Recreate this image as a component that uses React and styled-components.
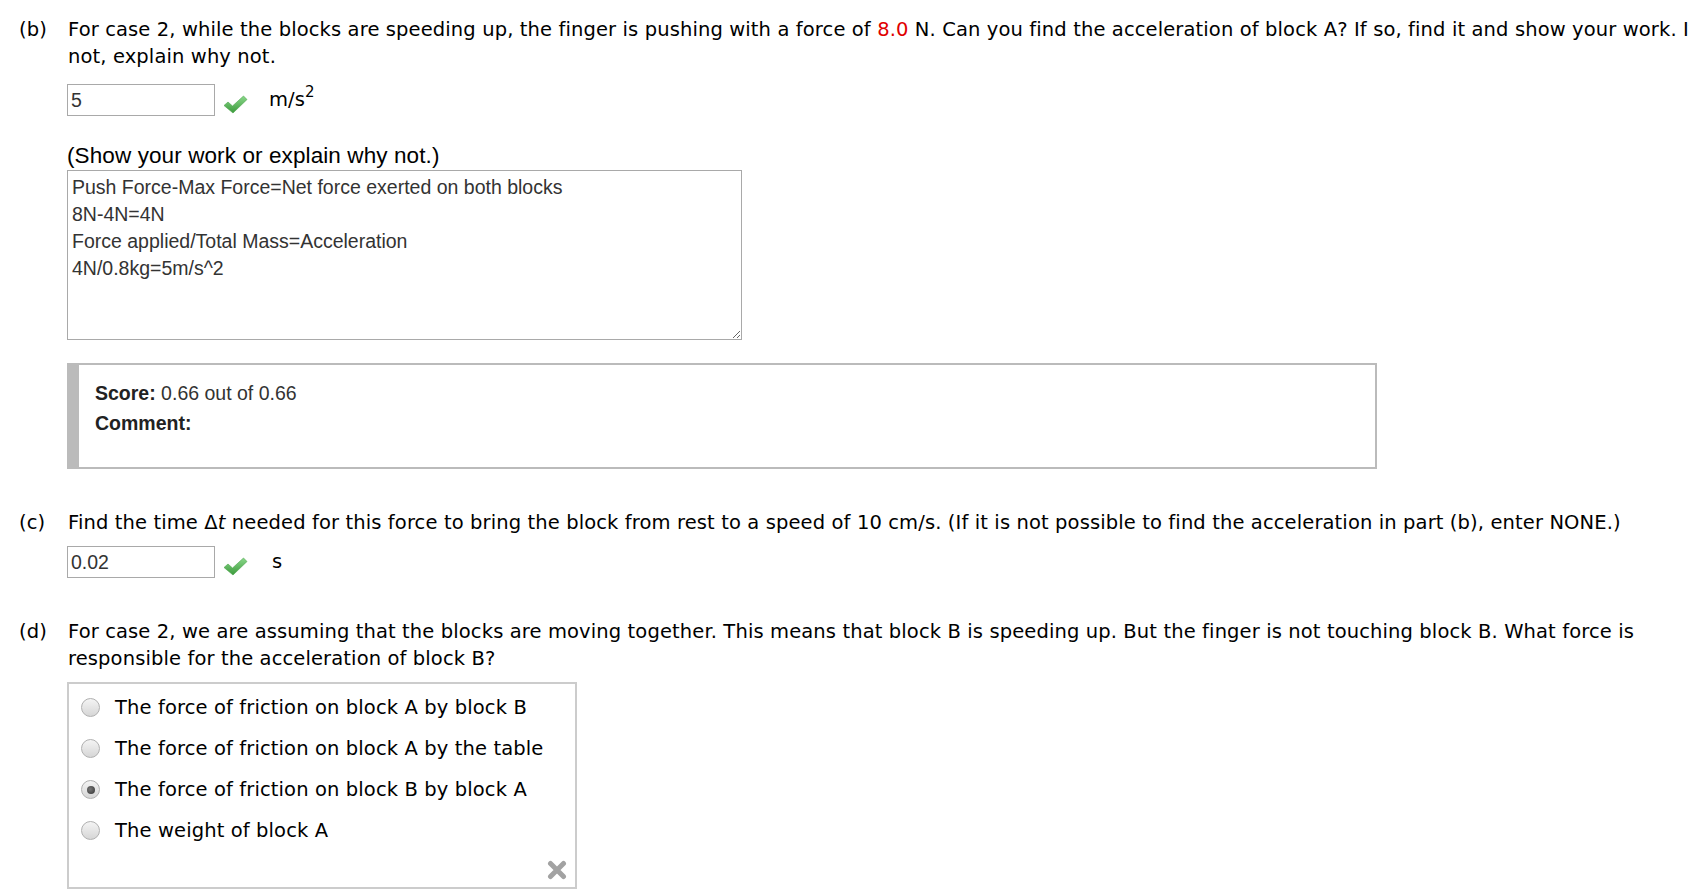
import React from "react";
import styled, { createGlobalStyle } from "styled-components";

const GlobalStyle = createGlobalStyle`
  html, body { margin: 0; padding: 0; background: #fff; overflow: hidden; }
  body { width: 1689px; height: 889px; }
  #root { width: 1689px; height: 889px; overflow: hidden; }
`;

const Page = styled.div`
  width: 1740px;
  padding: 15.5px 0 0 19px;
  box-sizing: border-box;
  font-family: "DejaVu Sans", Verdana, sans-serif;
  font-size: 19.5px;
  letter-spacing: 0.12px;
  line-height: 27px;
  color: #000;
`;

const Question = styled.section`
  display: grid;
  grid-template-columns: 48px 1650px;
  margin-bottom: 39.5px;
`;

const Label = styled.div`
  white-space: nowrap;
`;

const Body = styled.div`
  display: flex;
  flex-direction: column;
  align-items: flex-start;
`;

const Prompt = styled.p`
  margin: 0;
  padding-left: 1px;
`;

const Red = styled.span`
  color: #e00000;
`;

const AnswerRow = styled.div`
  display: flex;
  align-items: center;
  margin-top: ${(p) => p.$mt || 10.5}px;
`;

const TextInput = styled.input`
  box-sizing: border-box;
  width: 148px;
  height: 32px;
  border: 1px solid #a9a9a9;
  padding: 0 3px;
  margin: 0;
  font-family: "Liberation Sans", Arial, sans-serif;
  font-size: 19.5px;
  letter-spacing: 0;
  color: #333;
  background: #fff;
  outline: none;
`;

const CheckWrap = styled.span`
  display: inline-flex;
  margin-left: 8px;
  margin-top: 8px;
`;

const Unit = styled.span`
  margin-left: ${(p) => p.$ml || 21}px;
  margin-top: -2px;
  sup {
    font-size: 15px;
    vertical-align: 9px;
    line-height: 0;
  }
`;

const WorkLabel = styled.div`
  margin-top: 27px;
  font-family: "Liberation Sans", Arial, sans-serif;
  font-size: 22.5px;
  letter-spacing: 0.1px;
  line-height: 26px;
  color: #000;
`;

const WorkArea = styled.textarea`
  display: block;
  box-sizing: border-box;
  width: 675px;
  height: 170px;
  margin: 1px 0 0;
  padding: 2.5px 4px;
  border: 1px solid #a9a9a9;
  font-family: "Liberation Sans", Arial, sans-serif;
  font-size: 19.5px;
  letter-spacing: 0;
  line-height: 27px;
  color: #333;
  background: #fff;
  outline: none;
  resize: both;
`;

const ScoreBox = styled.div`
  box-sizing: border-box;
  width: 1310px;
  height: 106px;
  margin-top: 23px;
  border: 2px solid #bbbbbb;
  border-left-width: 12px;
  padding: 13px 16px;
  font-family: "Liberation Sans", Arial, sans-serif;
  font-size: 19.5px;
  letter-spacing: 0;
  line-height: 30px;
  color: #333;
`;

const ScoreLine = styled.div`
  b { color: #222; }
`;

const ChoiceBox = styled.div`
  position: relative;
  box-sizing: border-box;
  width: 510px;
  height: 207px;
  margin-top: 10.5px;
  border: 2px solid #cccccc;
  padding: 3px 0 0 12px;
`;

const Option = styled.label`
  display: flex;
  align-items: center;
  height: 41px;
  gap: 15px;
  cursor: pointer;
`;

const Radio = styled.span`
  box-sizing: border-box;
  width: 19px;
  height: 19px;
  border-radius: 50%;
  border: 1px solid #b0b0b0;
  background: linear-gradient(#f4f4f4, #d6d6d6);
  display: flex;
  align-items: center;
  justify-content: center;
  flex: none;
  &::after {
    content: "";
    display: ${(p) => (p.$checked ? "block" : "none")};
    width: 8px;
    height: 8px;
    border-radius: 50%;
    background: radial-gradient(circle at 40% 40%, #777, #333);
  }
`;

const Clear = styled.span`
  position: absolute;
  right: 8px;
  bottom: 7px;
  display: flex;
`;

const Check = () => (
  <svg width="25" height="19" viewBox="0 0 24 19">
    <defs>
      <linearGradient id="ck" x1="0" y1="0" x2="0" y2="1">
        <stop offset="0" stopColor="#8ad88a" />
        <stop offset="1" stopColor="#3c9a3c" />
      </linearGradient>
    </defs>
    <path d="M0.5 10.5 L4.5 7 L9 11 L20 1 L23.5 4.5 L9.5 18 Z" fill="url(#ck)" stroke="#4aa54a" strokeWidth="0.6" strokeLinejoin="round" />
  </svg>
);

const XMark = () => (
  <svg width="20" height="20" viewBox="0 0 20 20">
    <path d="M3.5 3.5 L16.5 16.5 M16.5 3.5 L3.5 16.5" stroke="#a2a2a2" strokeWidth="5" strokeLinecap="round" />
  </svg>
);

const options = [
  "The force of friction on block A by block B",
  "The force of friction on block A by the table",
  "The force of friction on block B by block A",
  "The weight of block A",
];

export default function App() {
  return (
    <>
      <GlobalStyle />
      <Page>
        <Question>
          <Label>(b)</Label>
          <Body>
            <Prompt>
              For case 2, while the blocks are speeding up, the finger is pushing with a force of <Red>8.0</Red> N. Can you find the acceleration of block A? If so, find it and show your work. If not, explain why not.
            </Prompt>
            <AnswerRow $mt={14.5}>
              <TextInput defaultValue="5" readOnly />
              <CheckWrap><Check /></CheckWrap>
              <Unit>m/s<sup>2</sup></Unit>
            </AnswerRow>
            <WorkLabel>(Show your work or explain why not.)</WorkLabel>
            <WorkArea
              readOnly
              defaultValue={"Push Force-Max Force=Net force exerted on both blocks\n8N-4N=4N\nForce applied/Total Mass=Acceleration\n4N/0.8kg=5m/s^2"}
            />
            <ScoreBox>
              <ScoreLine><b>Score:</b> 0.66 out of 0.66</ScoreLine>
              <ScoreLine><b>Comment:</b></ScoreLine>
            </ScoreBox>
          </Body>
        </Question>

        <Question>
          <Label>(c)</Label>
          <Body>
            <Prompt>
              Find the time Δ<i>t</i> needed for this force to bring the block from rest to a speed of 10 cm/s. (If it is not possible to find the acceleration in part (b), enter NONE.)
            </Prompt>
            <AnswerRow>
              <TextInput defaultValue="0.02" readOnly />
              <CheckWrap><Check /></CheckWrap>
              <Unit $ml={24}>s</Unit>
            </AnswerRow>
          </Body>
        </Question>

        <Question>
          <Label>(d)</Label>
          <Body>
            <Prompt>
              For case 2, we are assuming that the blocks are moving together. This means that block B is speeding up. But the finger is not touching block B. What force is responsible for the acceleration of block B?
            </Prompt>
            <ChoiceBox>
              {options.map((o, i) => (
                <Option key={o}>
                  <Radio $checked={i === 2} />
                  {o}
                </Option>
              ))}
              <Clear><XMark /></Clear>
            </ChoiceBox>
          </Body>
        </Question>
      </Page>
    </>
  );
}
